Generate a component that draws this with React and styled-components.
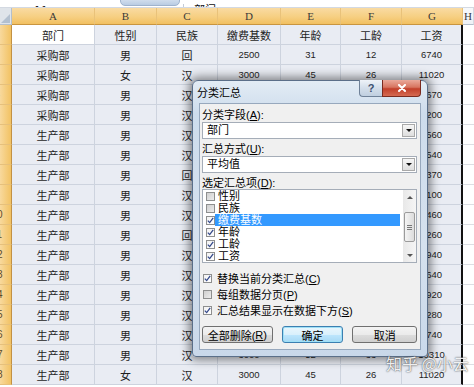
import React from "react";
import styled, { createGlobalStyle, css } from "styled-components";

const GlobalStyle = createGlobalStyle`
  html, body {
    margin: 0;
    padding: 0;
    background: #fff;
  }
  body {
    font-family: "Liberation Sans", "Noto Sans CJK SC", sans-serif;
  }
`;

const Page = styled.div`
  position: relative;
  width: 474px;
  height: 387px;
  overflow: hidden;
  background: #fff;
`;

/* ---------- formula bar (only its bottom edge is in view) ---------- */

const FormulaStrip = styled.div`
  height: 8px;
  display: flex;
  align-items: flex-end;
  overflow: hidden;
  box-sizing: border-box;
  border-bottom: 1px solid #d3d9e2;
  background: #fff;
`;

const NameBox = styled.div`
  width: 120px;
  box-sizing: border-box;
  padding-left: 33px;
  font-size: 11px;
  line-height: 12px;
  font-weight: bold;
  margin-bottom: -9px;
  color: #222;
`;

const FxButtons = styled.div`
  width: 60px;
  height: 12px;
  margin-bottom: 1px;
  box-sizing: border-box;
  border: 1px solid #9fb3cd;
  border-radius: 0 0 5px 5px;
  background: linear-gradient(#e6edf6, #b9cce3);
`;

const FormulaText = styled.div`
  margin-left: 3px;
  padding-left: 10px;
  border-left: 1px solid #c3cbd6;
  font-size: 11px;
  line-height: 12px;
  margin-bottom: -9px;
  color: #111;
`;

/* ---------- worksheet ---------- */

const Sheet = styled.div`
  display: grid;
  grid-template-columns: 12px 83px 62px 61px 63px 60px 61px 61px 11px;
  grid-template-rows: 17px;
  grid-auto-rows: 20px;
`;

const Corner = styled.div`
  position: relative;
  box-sizing: border-box;
  background: #dfe4ea;
  border-right: 1px solid #b4bfcc;
  border-bottom: 1px solid #b4bfcc;
  &::after {
    content: "";
    position: absolute;
    right: 1px;
    bottom: 1px;
    border-style: solid;
    border-width: 0 0 9px 9px;
    border-color: transparent transparent #b3c0cf transparent;
  }
`;

const ColHead = styled.div`
  box-sizing: border-box;
  display: flex;
  align-items: center;
  justify-content: center;
  font-family: "Liberation Serif", serif;
  font-size: 11px;
  color: #3a3a3a;
  border-right: 1px solid ${(p) => (p.$selected ? "#e9c27a" : "#d5dae1")};
  border-bottom: 1px solid ${(p) => (p.$selected ? "#c9953f" : "#b4bfcc")};
  background: ${(p) =>
    p.$selected
      ? "linear-gradient(#f9dba3, #f6cf82 55%, #f2c061)"
      : "linear-gradient(#f7f9fb, #eef1f5)"};
`;

const RowHead = styled.div`
  box-sizing: border-box;
  overflow: hidden;
  display: flex;
  align-items: center;
  border-right: 1px solid #c29144;
  border-bottom: 1px solid #e6c07c;
  background: linear-gradient(90deg, #f8d99d, #f2c263);
  font-size: 10px;
  color: #5b4a2a;
`;

const RowNumber = styled.span`
  flex: none;
  width: 26px;
  margin-left: -16px;
  text-align: center;
`;

const Cell = styled.div`
  box-sizing: border-box;
  display: flex;
  align-items: center;
  justify-content: center;
  white-space: nowrap;
  overflow: hidden;
  font-size: ${(p) => (p.$num ? "9.5px" : "11px")};
  color: #1e1e1e;
  background: ${(p) => (p.$active ? "#fff" : "#e9ecf3")};
  border-right: 1px solid #cdd3de;
  border-bottom: 1px solid #cdd3de;
  ${(p) =>
    p.$edge &&
    css`
      border-right: 2px solid #111;
    `}
`;

const SpareCell = styled.div`
  box-sizing: border-box;
  background: #fff;
  border-bottom: 1px solid #dcdfe4;
`;

/* ---------- dialog window ---------- */

const Window = styled.div`
  position: absolute;
  left: 192px;
  top: 80px;
  width: 236px;
  height: 277px;
  box-sizing: border-box;
  display: flex;
  flex-direction: column;
  padding: 0 6px 6px;
  border: 1px solid #5b6f89;
  border-radius: 6px 6px 4px 4px;
  background: linear-gradient(#e3ecf5, #cddcec 12%, #d5e1ee 60%, #c9d8ea);
  box-shadow: 0 0 10px 3px rgba(0, 0, 0, 0.45);
`;

const TitleBar = styled.div`
  height: 23px;
  display: flex;
  align-items: flex-start;
  justify-content: space-between;
`;

const Title = styled.div`
  margin-left: -2px;
  padding-top: 5px;
  font-size: 11px;
  line-height: 14px;
  color: #000;
`;

const CaptionButtons = styled.div`
  display: flex;
  margin-top: -1px;
`;

const HelpButton = styled.div`
  width: 23px;
  height: 17px;
  box-sizing: border-box;
  display: flex;
  align-items: center;
  justify-content: center;
  border: 1px solid #6f8198;
  border-top: none;
  border-right: none;
  border-radius: 0 0 0 4px;
  background: linear-gradient(#eef3f8, #d3deea 50%, #c0cfe0);
  font-size: 11px;
  font-weight: bold;
  color: #3d5170;
`;

const CloseButton = styled.div`
  width: 39px;
  height: 17px;
  box-sizing: border-box;
  display: flex;
  align-items: center;
  justify-content: center;
  border: 1px solid #7a2b1f;
  border-top: none;
  border-radius: 0 0 4px 0;
  background: linear-gradient(#eaa99a, #d77560 45%, #c2402a 55%, #d56a52);
`;

const Client = styled.div`
  flex: 1;
  box-sizing: border-box;
  padding: 5px 3px 6px 2px;
  border: 1px solid #97a8bd;
  background: #f0f0f0;
  font-size: 11px;
  color: #000;
`;

const FieldLabel = styled.div`
  height: 12px;
  line-height: 12px;
  margin-top: ${(p) => p.$gap || 0}px;
  white-space: nowrap;
`;

const Select = styled.div`
  height: 17px;
  margin-top: 1px;
  box-sizing: border-box;
  display: flex;
  align-items: center;
  border: 1px solid #a5adb8;
  background: #fff;
`;

const SelectText = styled.div`
  flex: 1;
  padding-left: 4px;
  line-height: 15px;
`;

const DropButton = styled.div`
  width: 13px;
  height: 13px;
  margin-right: 1px;
  box-sizing: border-box;
  display: flex;
  align-items: center;
  justify-content: center;
  border: 1px solid #a9a9a9;
  background: linear-gradient(#f6f6f6, #dedede);
  &::after {
    content: "";
    border-style: solid;
    border-width: 3px 3px 0 3px;
    border-color: #111 transparent transparent transparent;
  }
`;

const ListBox = styled.div`
  height: 74px;
  box-sizing: border-box;
  display: flex;
  border: 1px solid #a5adb8;
  background: #fff;
`;

const ListItems = styled.div`
  flex: 1;
  padding-right: 3px;
`;

const ListItem = styled.div`
  height: 12px;
  display: flex;
  align-items: center;
  padding-left: 3px;
`;

const ItemText = styled.div`
  flex: 1;
  height: 12px;
  line-height: 12px;
  padding-left: 3px;
  ${(p) =>
    p.$selected &&
    css`
      background: #3399ff;
      color: #fff;
    `}
`;

const ScrollBar = styled.div`
  width: 13px;
  display: flex;
  flex-direction: column;
  align-items: center;
  background: linear-gradient(90deg, #e8e8e8, #f5f5f5);
`;

const ScrollArrow = styled.div`
  height: 14px;
  display: flex;
  align-items: center;
  justify-content: center;
  &::after {
    content: "";
    border-style: solid;
    border-width: ${(p) => (p.$up ? "0 3px 3px 3px" : "3px 3px 0 3px")};
    border-color: ${(p) =>
      p.$up
        ? "transparent transparent #555 transparent"
        : "#555 transparent transparent transparent"};
  }
`;

const Thumb = styled.div`
  width: 11px;
  height: 30px;
  margin-top: 8px;
  box-sizing: border-box;
  display: flex;
  flex-direction: column;
  align-items: center;
  justify-content: center;
  gap: 1px;
  border: 1px solid #9b9b9b;
  border-radius: 2px;
  background: linear-gradient(90deg, #f4f4f4, #dcdcdc);
`;

const Grip = styled.div`
  width: 5px;
  height: 1px;
  background: #777;
`;

const Spacer = styled.div`
  flex: 1;
`;

const Box = styled.div`
  width: 9px;
  height: 9px;
  flex: none;
  box-sizing: border-box;
  display: flex;
  align-items: center;
  justify-content: center;
  border: 1px solid #8e8f8f;
  background: ${(p) =>
    p.$checked
      ? "linear-gradient(135deg, #f2f2f2, #fff)"
      : "linear-gradient(135deg, #cfcfcf, #ececec)"};
`;

const Options = styled.div`
  margin-top: 7px;
`;

const OptionRow = styled.div`
  height: 16px;
  display: flex;
  align-items: center;
  padding-left: 1px;
  gap: 5px;
  white-space: nowrap;
`;

const ButtonRow = styled.div`
  display: flex;
  gap: 9px;
  margin-top: 8px;
`;

const PushButton = styled.div`
  width: ${(p) => p.$w}px;
  height: 17px;
  box-sizing: border-box;
  display: flex;
  align-items: center;
  justify-content: center;
  border: 1px solid ${(p) => (p.$primary ? "#3c7fb1" : "#707070")};
  border-radius: 3px;
  background: linear-gradient(#f3f3f3, #ebebeb 50%, #dddddd 51%, #cfcfcf);
  ${(p) =>
    p.$primary &&
    css`
      box-shadow: inset 0 0 0 1px #9fe0f6;
      background: linear-gradient(#eaf6fd, #d9f0fc 50%, #bee6fd 51%, #a7d9f5);
    `}
`;

const Watermark = styled.div`
  position: absolute;
  left: 386px;
  top: 353px;
  font-family: "Noto Sans CJK SC", sans-serif;
  font-size: 16px;
  line-height: 20px;
  color: rgba(255, 255, 255, 0.92);
  text-shadow: 0 0 2px rgba(0, 0, 0, 0.6), 0 0 1px rgba(0, 0, 0, 0.4);
  white-space: nowrap;
`;

const Check = ({ checked }) => (
  <Box $checked={checked}>
    {checked && (
      <svg width="7" height="7" viewBox="0 0 7 7">
        <path d="M0.8 3.6 L2.7 5.6 L6.2 0.9" fill="none" stroke="#34498a" strokeWidth="1.3" />
      </svg>
    )}
  </Box>
);

const columns = ["A", "B", "C", "D", "E", "F", "G"];

const header = ["部门", "性别", "民族", "缴费基数", "年龄", "工龄", "工资"];

const rows = [
  ["采购部", "男", "回", "2500", "31", "12", "6740"],
  ["采购部", "女", "汉", "3000", "45", "26", "11020"],
  ["采购部", "男", "汉", "2500", "28", "6", "5670"],
  ["采购部", "男", "汉", "3000", "36", "15", "7200"],
  ["生产部", "男", "汉", "2500", "30", "8", "6560"],
  ["生产部", "男", "汉", "2500", "33", "10", "6540"],
  ["生产部", "男", "回", "3000", "41", "20", "8370"],
  ["生产部", "男", "汉", "2500", "29", "7", "5100"],
  ["生产部", "男", "汉", "3000", "38", "16", "7460"],
  ["生产部", "男", "回", "2500", "27", "5", "5260"],
  ["生产部", "男", "汉", "3000", "44", "23", "9940"],
  ["生产部", "男", "汉", "2500", "32", "11", "6640"],
  ["生产部", "男", "汉", "3000", "39", "18", "7920"],
  ["生产部", "男", "汉", "2500", "26", "4", "5280"],
  ["生产部", "男", "汉", "3000", "35", "14", "6740"],
  ["生产部", "男", "汉", "3000", "52", "33", "10310"],
  ["生产部", "女", "汉", "3000", "45", "26", "11020"],
];

const summaryItems = [
  { label: "性别", checked: false },
  { label: "民族", checked: false },
  { label: "缴费基数", checked: true, selected: true },
  { label: "年龄", checked: true },
  { label: "工龄", checked: true },
  { label: "工资", checked: true },
];

const Key = ({ k }) => (
  <>
    (<u>{k}</u>)
  </>
);

export default function App() {
  const renderRow = (values, index) => (
    <React.Fragment key={index}>
      <RowHead>
        <RowNumber>{index + 1}</RowNumber>
      </RowHead>
      {values.map((v, i) => (
        <Cell
          key={i}
          $num={/^\d+$/.test(v)}
          $active={index === 0 && i === 0}
          $edge={i === 6}
        >
          {v}
        </Cell>
      ))}
      <SpareCell />
    </React.Fragment>
  );

  return (
    <Page>
      <GlobalStyle />
      <FormulaStrip>
        <NameBox>A1</NameBox>
        <FxButtons />
        <FormulaText>部门</FormulaText>
      </FormulaStrip>

      <Sheet>
        <Corner />
        {columns.map((c) => (
          <ColHead key={c} $selected>
            {c}
          </ColHead>
        ))}
        <ColHead>H</ColHead>
        {renderRow(header, 0)}
        {rows.map((r, i) => renderRow(r, i + 1))}
      </Sheet>

      <Window>
        <TitleBar>
          <Title>分类汇总</Title>
          <CaptionButtons>
            <HelpButton>?</HelpButton>
            <CloseButton>
              <svg width="10" height="8" viewBox="0 0 10 8">
                <path d="M2 1 L8 7 M8 1 L2 7" stroke="#fff" strokeWidth="2" strokeLinecap="round" />
              </svg>
            </CloseButton>
          </CaptionButtons>
        </TitleBar>
        <Client>
          <FieldLabel>
            分类字段<Key k="A" />:
          </FieldLabel>
          <Select>
            <SelectText>部门</SelectText>
            <DropButton />
          </Select>
          <FieldLabel $gap={4}>
            汇总方式<Key k="U" />:
          </FieldLabel>
          <Select>
            <SelectText>平均值</SelectText>
            <DropButton />
          </Select>
          <FieldLabel $gap={4}>
            选定汇总项<Key k="D" />:
          </FieldLabel>
          <ListBox>
            <ListItems>
              {summaryItems.map((item) => (
                <ListItem key={item.label}>
                  <Check checked={item.checked} />
                  <ItemText $selected={item.selected}>{item.label}</ItemText>
                </ListItem>
              ))}
            </ListItems>
            <ScrollBar>
              <ScrollArrow $up />
              <Thumb>
                <Grip />
                <Grip />
                <Grip />
              </Thumb>
              <Spacer />
              <ScrollArrow />
            </ScrollBar>
          </ListBox>
          <Options>
            <OptionRow>
              <Check checked />
              <span>
                替换当前分类汇总<Key k="C" />
              </span>
            </OptionRow>
            <OptionRow>
              <Check />
              <span>
                每组数据分页<Key k="P" />
              </span>
            </OptionRow>
            <OptionRow>
              <Check checked />
              <span>
                汇总结果显示在数据下方<Key k="S" />
              </span>
            </OptionRow>
          </Options>
          <ButtonRow>
            <PushButton $w={71}>
              全部删除<Key k="R" />
            </PushButton>
            <PushButton $w={62} $primary>
              确定
            </PushButton>
            <PushButton $w={65}>取消</PushButton>
          </ButtonRow>
        </Client>
      </Window>

      <Watermark>知乎 @小云</Watermark>
    </Page>
  );
}
